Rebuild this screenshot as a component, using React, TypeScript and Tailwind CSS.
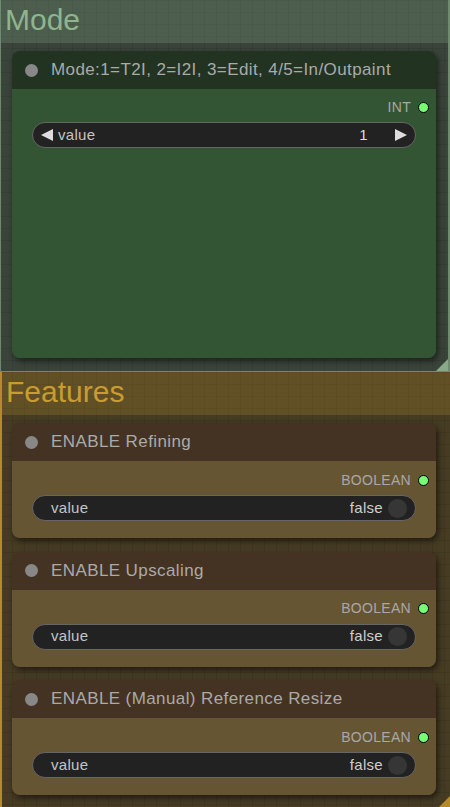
import React from 'react';

type Variant = 'green' | 'yellow';

const gridBg =
  "bg-[linear-gradient(to_right,rgba(0,0,0,0.22)_1px,transparent_1px),linear-gradient(to_bottom,rgba(0,0,0,0.22)_1px,transparent_1px)] bg-[size:12px_12px]";

const Corner: React.FC<{ color: string }> = ({ color }) => (
  <svg className="absolute right-0 bottom-0" width="12" height="12" viewBox="0 0 12 12">
    <polygon points="12,0 12,12 0,12" fill={color} />
  </svg>
);

const Output: React.FC<{ type: string }> = ({ type }) => (
  <div className="flex h-[20px] items-center justify-end gap-[7px] pr-[7px]">
    <span className="text-[14px] tracking-[0.3px] text-[#a8a8a8]">{type}</span>
    <span className="h-[11px] w-[11px] rounded-full border border-black bg-[#7f7]" />
  </div>
);

const Arrow: React.FC<{ dir: 'left' | 'right' }> = ({ dir }) => (
  <svg width="12" height="12" viewBox="0 0 12 12">
    {dir === 'left' ? (
      <polygon points="12,0 12,12 0,6" fill="#dddddd" />
    ) : (
      <polygon points="0,0 0,12 12,6" fill="#dddddd" />
    )}
  </svg>
);

const IntWidget: React.FC<{ value: number }> = ({ value }) => (
  <div className="mx-[20px] mt-[5px] flex h-[26px] items-center rounded-full border border-[#666] bg-[#222] px-[8px] text-[15px] tracking-[0.3px]">
    <Arrow dir="left" />
    <span className="ml-[5px] flex-1 text-[#c4c4c4]">value</span>
    <span className="mr-[27px] text-[#dddddd]">{value}</span>
    <Arrow dir="right" />
  </div>
);

const BoolWidget: React.FC = () => (
  <div className="mx-[20px] mt-[5px] flex h-[26px] items-center rounded-full border border-[#666] bg-[#222] pl-[18px] pr-[8px] text-[15px] tracking-[0.3px]">
    <span className="flex-1 text-[#c4c4c4]">value</span>
    <span className="text-[#cfcfcf]">false</span>
    <span className="ml-[5px] h-[19px] w-[19px] rounded-full bg-[#363636]" />
  </div>
);

const Node: React.FC<{ title: string; variant: Variant; bodyH: string; children: React.ReactNode }> = ({
  title,
  variant,
  bodyH,
  children,
}) => (
  <div className="overflow-hidden rounded-[8px] shadow-[2px_3px_6px_rgba(0,0,0,0.55)]">
    <div
      className={`flex h-[38px] items-center ${variant === 'green' ? 'bg-[#223322]' : 'bg-[#443322]'}`}
    >
      <span className="ml-[13px] h-[13px] w-[13px] rounded-full bg-[#888]" />
      <span className="ml-[13px] whitespace-nowrap text-[17px] tracking-[0.4px] text-[#aaaaaa]">{title}</span>
    </div>
    <div className={`flex flex-col ${bodyH} ${variant === 'green' ? 'bg-[#335533]' : 'bg-[#665533]'}`}>
      {children}
    </div>
  </div>
);

const features = ['ENABLE Refining', 'ENABLE Upscaling', 'ENABLE (Manual) Reference Resize'];

export default function App() {
  return (
    <div className={`relative h-[807px] w-[450px] overflow-hidden bg-[#222] font-['Liberation_Sans',Arial,sans-serif] ${gridBg}`}>
      {/* Mode group */}
      <div className="relative h-[372px] w-[450px] border-b border-l border-r-2 border-[#88aa88]/70 bg-[rgba(136,170,136,0.25)]">
        <div className="h-[43px] bg-[rgba(136,170,136,0.25)] pl-[4px] text-[30px] leading-[40px] text-[#8fb58f]">
          Mode
        </div>
        <div className="pl-[11px] pr-[12px] pt-[8px]">
          <Node title="Mode:1=T2I, 2=I2I, 3=Edit, 4/5=In/Outpaint" variant="green" bodyH="h-[269px] pt-[8px]">
            <Output type="INT" />
            <IntWidget value={1} />
          </Node>
        </div>
        <Corner color="#88aa88" />
      </div>

      {/* Features group */}
      <div className="relative h-[436px] w-[450px] border-l-2 border-[#b58b2a] bg-[rgba(181,139,42,0.25)]">
        <div className="h-[43px] bg-[rgba(181,139,42,0.25)] pl-[4px] text-[30px] leading-[40px] text-[#c99c30]">
          Features
        </div>
        <div className="flex flex-col gap-[13.5px] pl-[10px] pr-[14px] pt-[8px]">
          {features.map((f) => (
            <Node key={f} title={f} variant="yellow" bodyH="h-[77px] pt-[9px]">
              <Output type="BOOLEAN" />
              <BoolWidget />
            </Node>
          ))}
        </div>
        <Corner color="#b58b2a" />
      </div>
    </div>
  );
}
